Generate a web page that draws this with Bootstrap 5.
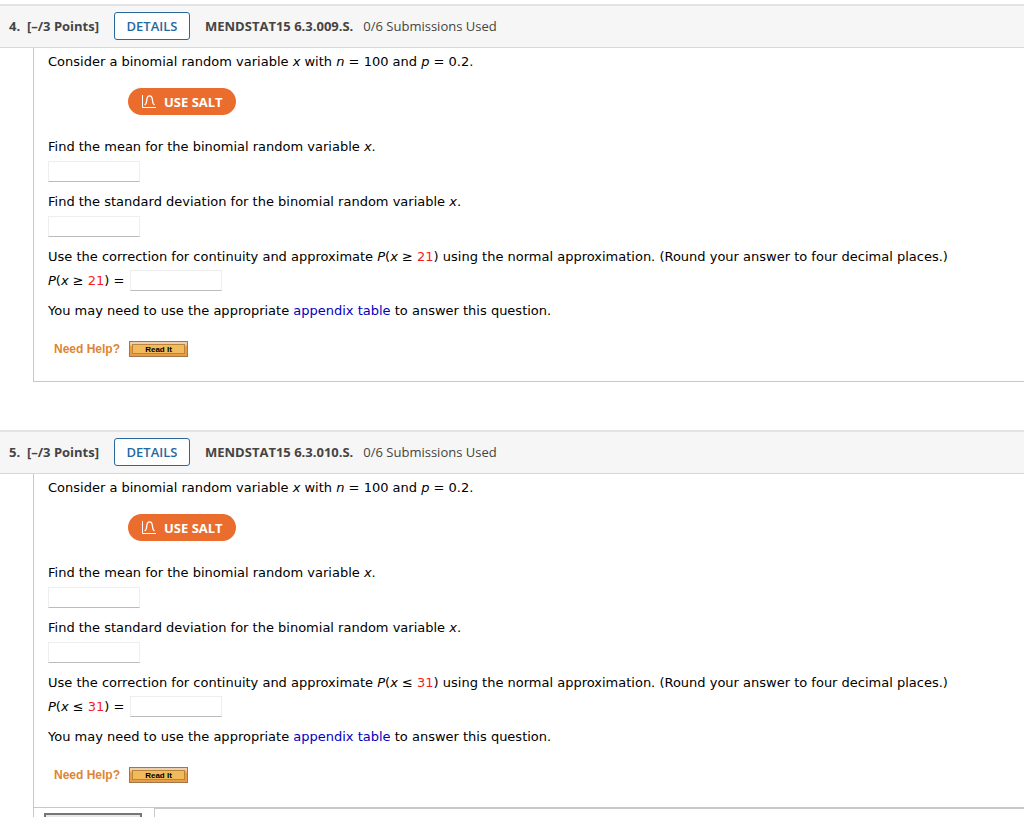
<!DOCTYPE html>
<html lang="en">
<head>
<meta charset="utf-8">
<meta name="viewport" content="width=device-width, initial-scale=1">
<title>Assignment questions</title>
<link href="https://cdn.jsdelivr.net/npm/bootstrap@5.3.0/dist/css/bootstrap.min.css" rel="stylesheet">
<style>
body { font-family: "DejaVu Sans", Verdana, sans-serif; font-size: 13px; line-height: 20px; color: #000; background: #fff; }
.q-head { font-family: "Open Sans", sans-serif; height: 44px; background: #f6f6f6; border-top: 2px solid #e3e3e3; border-bottom: 1px solid #d8d8d8; color: #444; padding: 0 0 2px 9px; font-size: 13px; }
.q-title { font-size: 13px; line-height: 20px; font-weight: 700; }
.q-used { margin-left: 10px; }
.btn-details { width: 76px; height: 28px; padding: 0; border: 1px solid #27699f; border-radius: 3px; background: #fff; color: #27699f; font-size: 13px; font-weight: 600; line-height: 20px; margin: 0 15px; }
.q-body { margin-left: 33px; padding: 4px 0 22px 14px; border-left: 1px solid #c8c8c8; }
.q-closed { border-bottom: 1px solid #c8c8c8; margin-bottom: 48px; }
.btn-salt { display: flex; width: 108px; height: 27px; margin: 16px 0 22px 80px; padding: 0 0 0 13px; border: 0; border-radius: 14px; background: #ea6d2d; color: #fff; font-family: "Open Sans", sans-serif; font-size: 13px; font-weight: 700; line-height: 20px; }
.next-part { margin-top: 10px; }
.answer { width: 92px; height: 21px; padding: 0 4px; border: 1px solid #eee; border-bottom-color: #bbb; border-radius: 0; font-size: 13px; }
.answer-row { margin-top: 3px; gap: 6px; }
.num { color: #f81c1c; }
.q-body a { color: #0000c0; text-decoration: none; }
.help { font-family: "Liberation Sans", Arial, sans-serif; margin-top: 18px; padding-left: 6px; gap: 9px; }
.help-label { color: #de8533; font-weight: 700; font-size: 12px; }
.btn-read { width: 59px; height: 16px; padding: 2px 2px; border: 1px solid #a0774d; background: linear-gradient(#eccfae 2px, #ec9b45 5px); color: #000; font-size: 8px; font-weight: 700; line-height: 9px; }
.btn-read span { display: block; height: 10px; border: 1px solid #b8853d; background: #f1bb5b; }
.submit-strip { margin-left: 33px; height: 32px; border-left: 1px solid #c8c8c8; border-top: 1px solid #c8c8c8; }
.submit-cell { width: 121px; border-right: 1px solid #c8c8c8; padding: 5px 0 0 10px; }
.btn-submit { display: block; width: 98px; height: 22px; padding: 0; border: 2px solid #767676; background: #e7e7e7; }
.submit-rest { border-top: 1px solid #c8c8c8; }
</style>
</head>
<body>
<main class="vh-100 overflow-hidden pt-1">
  <section>
    <header class="q-head d-flex align-items-center">
      <h2 class="q-title mb-0">4.&nbsp; [–/3 Points]</h2>
      <button type="button" class="btn-details">DETAILS</button>
      <strong>MENDSTAT15 6.3.009.S.</strong>
      <span class="q-used">0/6 Submissions Used</span>
    </header>
    <div class="q-body q-closed">
      <p class="mb-0">Consider a binomial random variable <i>x</i> with <i>n</i> = 100 and <i>p</i> = 0.2.</p>
      <button type="button" class="btn-salt align-items-center gap-2">
        <svg width="15" height="15" viewBox="0 0 15 15" fill="none" stroke="#fff" aria-hidden="true"><path d="M1.500 1v12.500H15"/><path d="M3.500 10.700C5 10.700 5.400 9.500 5.700 6.500C5.900 3.500 6.500 1.800 8.600 1.800S11.300 3.500 11.500 6.500C11.800 9.500 12.200 10.700 13.700 10.700" stroke-width="1.300"/></svg>
        USE SALT</button>
      <label for="mean4" class="d-block mb-1">Find the mean for the binomial random variable <i>x</i>.</label>
      <input id="mean4" class="answer d-block" type="text">
      <label for="sd4" class="d-block mb-1 next-part">Find the standard deviation for the binomial random variable <i>x</i>.</label>
      <input id="sd4" class="answer d-block" type="text">
      <p class="mb-0 next-part">Use the correction for continuity and approximate <i>P</i>(<i>x</i> ≥ <span class="num">21</span>) using the normal approximation. (Round your answer to four decimal places.)</p>
      <div class="answer-row d-flex align-items-center">
        <label for="prob4"><i>P</i>(<i>x</i> ≥ <span class="num">21</span>) =</label>
        <input id="prob4" class="answer" type="text">
      </div>
      <p class="mb-0 next-part">You may need to use the appropriate <a href="#">appendix table</a> to answer this question.</p>
      <div class="help d-flex align-items-center">
        <span class="help-label">Need Help?</span>
        <button type="button" class="btn-read"><span>Read It</span></button>
      </div>
    </div>
  </section>
  <section>
    <header class="q-head d-flex align-items-center">
      <h2 class="q-title mb-0">5.&nbsp; [–/3 Points]</h2>
      <button type="button" class="btn-details">DETAILS</button>
      <strong>MENDSTAT15 6.3.010.S.</strong>
      <span class="q-used">0/6 Submissions Used</span>
    </header>
    <div class="q-body">
      <p class="mb-0">Consider a binomial random variable <i>x</i> with <i>n</i> = 100 and <i>p</i> = 0.2.</p>
      <button type="button" class="btn-salt align-items-center gap-2">
        <svg width="15" height="15" viewBox="0 0 15 15" fill="none" stroke="#fff" aria-hidden="true"><path d="M1.500 1v12.500H15"/><path d="M3.500 10.700C5 10.700 5.400 9.500 5.700 6.500C5.900 3.500 6.500 1.800 8.600 1.800S11.300 3.500 11.500 6.500C11.800 9.500 12.200 10.700 13.700 10.700" stroke-width="1.300"/></svg>
        USE SALT</button>
      <label for="mean5" class="d-block mb-1">Find the mean for the binomial random variable <i>x</i>.</label>
      <input id="mean5" class="answer d-block" type="text">
      <label for="sd5" class="d-block mb-1 next-part">Find the standard deviation for the binomial random variable <i>x</i>.</label>
      <input id="sd5" class="answer d-block" type="text">
      <p class="mb-0 next-part">Use the correction for continuity and approximate <i>P</i>(<i>x</i> ≤ <span class="num">31</span>) using the normal approximation. (Round your answer to four decimal places.)</p>
      <div class="answer-row d-flex align-items-center">
        <label for="prob5"><i>P</i>(<i>x</i> ≤ <span class="num">31</span>) =</label>
        <input id="prob5" class="answer" type="text">
      </div>
      <p class="mb-0 next-part">You may need to use the appropriate <a href="#">appendix table</a> to answer this question.</p>
      <div class="help d-flex align-items-center">
        <span class="help-label">Need Help?</span>
        <button type="button" class="btn-read"><span>Read It</span></button>
      </div>
    </div>
    <div class="submit-strip d-flex">
      <div class="submit-cell"><button type="button" class="btn-submit" aria-label="Submit"></button></div>
      <div class="submit-rest flex-fill"></div>
    </div>
  </section>
</main>
<script src="https://cdn.jsdelivr.net/npm/bootstrap@5.3.0/dist/js/bootstrap.bundle.min.js"></script>
</body>
</html>
